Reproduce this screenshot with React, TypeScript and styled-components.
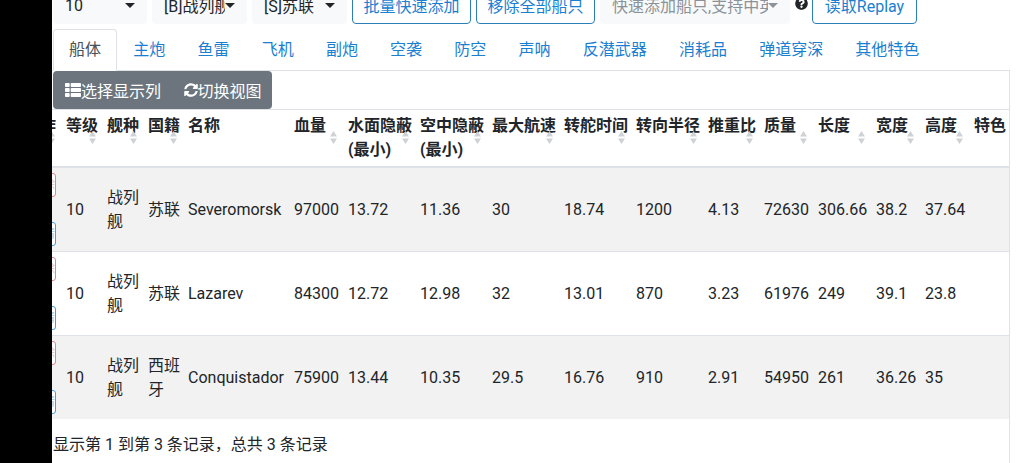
import React from 'react';
import styled, { createGlobalStyle } from 'styled-components';
import { FaQuestionCircle, FaSyncAlt, FaThList } from 'react-icons/fa';

const GlobalStyle = createGlobalStyle`
  html, body {
    margin: 0;
    padding: 0;
    background: #fff;
    overflow: hidden;
  }
  body {
    font-family: Roboto, "Noto Sans CJK SC", sans-serif;
    font-size: 16px;
    color: #212529;
  }
`;

const Page = styled.div`
  width: 1024px;
  height: 463px;
  display: flex;
  overflow: hidden;
`;

const BlackBar = styled.div`
  width: 52px;
  flex: none;
  background: #000;
`;

const Main = styled.div`
  width: 958px;
  flex: none;
  margin-top: -14px;
`;

const Toolbar = styled.div`
  height: 38px;
  display: flex;
  align-items: center;
  gap: 5px;
  padding-left: 1px;
`;

const Select = styled.div<{ $w: number }>`
  width: ${p => p.$w}px;
  height: 38px;
  flex: none;
  display: flex;
  align-items: center;
  justify-content: space-between;
  padding: 0 12px;
  box-sizing: border-box;
  background: #f8f9fa;
  border-radius: 4px;
  white-space: nowrap;
  overflow: hidden;
`;

const SelectText = styled.span<{ $muted?: boolean }>`
  overflow: hidden;
  flex: 1;
  color: ${p => (p.$muted ? '#8b9299' : '#212529')};
`;

const Caret = styled.i<{ $muted?: boolean }>`
  flex: none;
  width: 0;
  height: 0;
  border-top: 5px solid ${p => (p.$muted ? '#8b9299' : '#212529')};
  border-left: 5px solid transparent;
  border-right: 5px solid transparent;
`;

const OutlineButton = styled.button<{ $w: number }>`
  width: ${p => p.$w}px;
  height: 38px;
  flex: none;
  padding: 0;
  background: #fff;
  border: 1px solid #2a7fb8;
  border-radius: 4px;
  color: #1b7fd1;
  font-family: Roboto, "Noto Sans CJK SC", sans-serif;
  font-size: 16px;
`;

const HelpIcon = styled.span`
  width: 13px;
  flex: none;
  display: flex;
  margin: 0 -1px 3px 0;
  font-size: 13px;
`;

const Tabs = styled.ul`
  list-style: none;
  margin: 5px 0 0;
  padding: 0 0 0 1px;
  height: 41px;
  display: flex;
  box-sizing: content-box;
  border-bottom: 1px solid #dee2e6;
`;

const Tab = styled.li<{ $active?: boolean }>`
  box-sizing: border-box;
  padding: 0 15.1px;
  line-height: 39px;
  height: ${p => (p.$active ? '42px' : '41px')};
  color: ${p => (p.$active ? '#495057' : '#1b7fd1')};
  background: ${p => (p.$active ? '#fff' : 'transparent')};
  border: 1px solid ${p => (p.$active ? '#dee2e6' : 'transparent')};
  border-bottom-color: ${p => (p.$active ? '#fff' : 'transparent')};
  border-radius: 4px 4px 0 0;
  white-space: nowrap;
`;

const Content = styled.div`
  height: 408px;
  border-right: 1px solid #dee2e6;
  overflow: hidden;
`;

const ColumnsBar = styled.div`
  display: inline-flex;
  height: 38px;
  margin-left: 1px;
  background: #6c757d;
  border-radius: 4px;
  color: #fff;
  vertical-align: top;
`;

const BarButton = styled.div`
  display: flex;
  align-items: center;
  padding: 0 10.5px 0 12px;
  white-space: nowrap;
`;

const TableClip = styled.div`
  overflow: hidden;
  border-top: 1px solid #dee2e6;
`;

const Table = styled.table`
  border-collapse: collapse;
  table-layout: fixed;
  width: 992px;
  margin-left: -33px;
`;

const Head = styled.th`
  position: relative;
  height: 57px;
  padding: 4px 3px 0 5px;
  box-sizing: border-box;
  vertical-align: top;
  text-align: left;
  font-weight: 700;
  line-height: 24px;
  border-bottom: 2px solid #dee2e6;
  white-space: nowrap;
  overflow: hidden;
`;

const SortIcon = styled.svg`
  position: absolute;
  right: 6px;
  top: 21px;
  width: 7px;
  height: 13px;
`;

const Row = styled.tr<{ $odd?: boolean }>`
  background: ${p => (p.$odd ? '#f2f2f2' : '#fff')};
  border-bottom: 1px solid #dee2e6;

  &:last-child {
    border-bottom: none;
  }
`;

const Cell = styled.td`
  height: 84px;
  box-sizing: border-box;
  padding: 6px 3px 4px 5px;
  line-height: 24px;
  overflow: hidden;
`;

const ActionCell = styled(Cell)`
  padding: 0 5px 0 0;
`;

const Actions = styled.div`
  display: flex;
  flex-direction: column;
  align-items: flex-end;
  gap: 25px;
`;

const ActionButton = styled.div<{ $blue?: boolean }>`
  width: 30px;
  height: 24px;
  border: 1px solid ${p => (p.$blue ? '#4a9fd8' : '#dc8a8f')};
  border-radius: 3px;
  box-sizing: border-box;
  background: #fff;
  color: ${p => (p.$blue ? '#a5cfeb' : '#e8c0c3')};
  font-size: 12px;
  line-height: 22px;
  text-align: right;
  white-space: nowrap;
`;

const Footer = styled.div`
  padding: 14px 0 0 1px;
  line-height: 24px;
  white-space: nowrap;
`;

const tabs = ['船体', '主炮', '鱼雷', '飞机', '副炮', '空袭', '防空', '声呐', '反潜武器', '消耗品', '弹道穿深', '其他特色'];

const columns: { title: React.ReactNode; width: number; sort?: boolean }[] = [
  { title: '操作', width: 42, sort: true },
  { title: '等级', width: 41, sort: true },
  { title: '舰种', width: 41, sort: true },
  { title: '国籍', width: 40, sort: true },
  { title: '名称', width: 106 },
  { title: '血量', width: 54, sort: true },
  { title: <>水面隐蔽<br />(最小)</>, width: 72, sort: true },
  { title: <>空中隐蔽<br />(最小)</>, width: 72, sort: true },
  { title: '最大航速', width: 72, sort: true },
  { title: '转舵时间', width: 72, sort: true },
  { title: '转向半径', width: 72, sort: true },
  { title: '推重比', width: 56, sort: true },
  { title: '质量', width: 54, sort: true },
  { title: '长度', width: 58, sort: true },
  { title: '宽度', width: 49, sort: true },
  { title: '高度', width: 49, sort: true },
  { title: '特色', width: 42 },
];

const ships = [
  ['10', '战列舰', '苏联', 'Severomorsk', '97000', '13.72', '11.36', '30', '18.74', '1200', '4.13', '72630', '306.66', '38.2', '37.64', ''],
  ['10', '战列舰', '苏联', 'Lazarev', '84300', '12.72', '12.98', '32', '13.01', '870', '3.23', '61976', '249', '39.1', '23.8', ''],
  ['10', '战列舰', '西班牙', 'Conquistador', '75900', '13.44', '10.35', '29.5', '16.76', '910', '2.91', '54950', '261', '36.26', '35', ''],
];

export default function App() {
  return (
    <Page>
      <GlobalStyle />
      <BlackBar />
      <Main>
        <Toolbar>
          <Select $w={94}><SelectText>10</SelectText><Caret /></Select>
          <Select $w={95}><SelectText>[B]战列舰</SelectText><Caret /></Select>
          <Select $w={95}><SelectText>[S]苏联</SelectText><Caret /></Select>
          <OutlineButton $w={119}>批量快速添加</OutlineButton>
          <OutlineButton $w={119}>移除全部船只</OutlineButton>
          <Select $w={190}><SelectText $muted>快速添加船只,支持中英文</SelectText><Caret $muted /></Select>
          <HelpIcon><FaQuestionCircle /></HelpIcon>
          <OutlineButton $w={105}>读取Replay</OutlineButton>
        </Toolbar>
        <Tabs>
          {tabs.map((t, i) => <Tab key={t} $active={i === 0}>{t}</Tab>)}
        </Tabs>
        <Content>
          <ColumnsBar>
            <BarButton><FaThList size={16} />选择显示列</BarButton>
            <BarButton><FaSyncAlt size={14} />切换视图</BarButton>
          </ColumnsBar>
          <TableClip>
            <Table>
              <colgroup>
                {columns.map((c, i) => <col key={i} width={c.width} />)}
              </colgroup>
              <thead>
                <tr>
                  {columns.map((c, i) => (
                    <Head key={i}>
                      {c.title}
                      {c.sort && (
                        <SortIcon viewBox="0 0 7 13">
                          <path d="M3.5 0 7 5.5H0zM3.5 13 0 7.5h7z" fill="#cfd2d5" />
                        </SortIcon>
                      )}
                    </Head>
                  ))}
                </tr>
              </thead>
              <tbody>
                {ships.map((ship, r) => (
                  <Row key={r} $odd={r !== 1}>
                    <ActionCell>
                      <Actions>
                        <ActionButton>移除</ActionButton>
                        <ActionButton $blue>详情</ActionButton>
                      </Actions>
                    </ActionCell>
                    {ship.map((v, i) => <Cell key={i}>{v}</Cell>)}
                  </Row>
                ))}
              </tbody>
            </Table>
          </TableClip>
          <Footer>显示第 1 到第 3 条记录，总共 3 条记录</Footer>
        </Content>
      </Main>
    </Page>
  );
}
